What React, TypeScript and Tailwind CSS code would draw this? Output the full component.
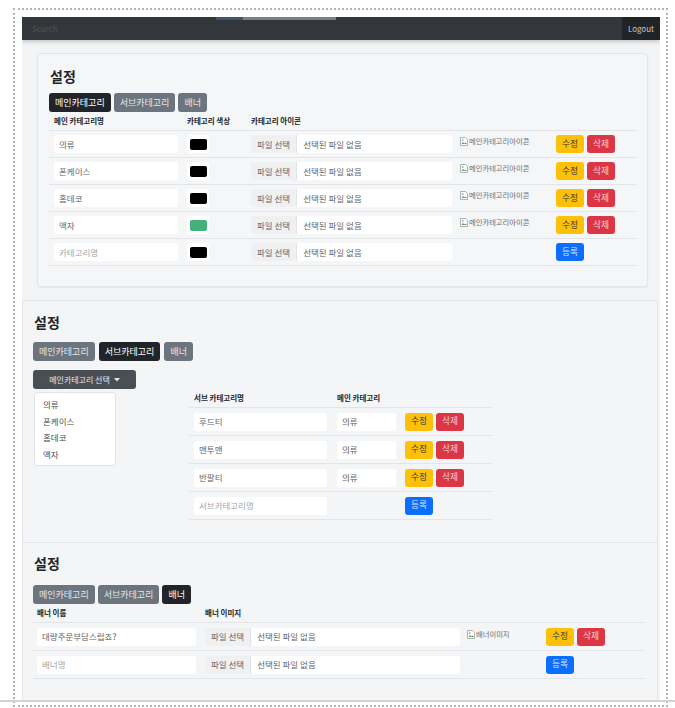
import React from "react"

const FONT = "font-['Noto_Sans_CJK_KR','Noto_Sans',sans-serif]"

function Tabs({ active, gap }: { active: number; gap: string }) {
  const labels = ["메인카테고리", "서브카테고리", "배너"]
  return (
    <div className={`flex ${gap}`}>
      {labels.map((l, i) => (
        <div
          key={l}
          className={`h-[19px] px-[6px] rounded-[3px] flex items-center text-[9px] leading-none ${
            i === active ? "bg-[#212529] text-white" : "bg-[#6c757d] text-[#e4e6e8]"
          }`}
        >
          {l}
        </div>
      ))}
    </div>
  )
}

function Heading() {
  return <h2 className="text-[14px] leading-[18px] font-bold text-[#212529] pl-[1px]">설정</h2>
}

function TextBox({ value, placeholder, w }: { value?: string; placeholder?: string; w: string }) {
  return (
    <div className={`${w} h-[18px] bg-white rounded-[3px] px-[5px] flex items-center text-[8.5px] leading-none`}>
      {value ? <span className="text-[#5f646a]">{value}</span> : <span className="text-[#a3a7ab]">{placeholder}</span>}
    </div>
  )
}

function FileBox({ w }: { w: string }) {
  return (
    <div className={`${w} h-[18px] bg-white rounded-[3px] flex items-stretch text-[8.5px] leading-none text-[#5f646a] overflow-hidden`}>
      <div className="bg-[#eef0f2] px-[6px] flex items-center border-r border-[#e2e4e7]">파일 선택</div>
      <div className="pl-[6px] flex items-center">선택된 파일 없음</div>
    </div>
  )
}

function Swatch({ color }: { color: string }) {
  return (
    <div className="w-[22px] h-[18px] bg-white rounded-[3px] flex items-center justify-center">
      <div className="w-[17px] h-[11px] rounded-[2px]" style={{ backgroundColor: color }} />
    </div>
  )
}

function Btn({ kind, children }: { kind: "edit" | "del" | "add"; children: React.ReactNode }) {
  const cls =
    kind === "edit"
      ? "bg-[#ffc107] text-[#3a3a3a]"
      : kind === "del"
        ? "bg-[#dc3545] text-[#f3d6d9]"
        : "bg-[#0d6efd] text-[#dbe8ff]"
  return <div className={`h-[18px] px-[6px] rounded-[3px] flex items-center text-[8.7px] leading-none ${cls}`}>{children}</div>
}

function Broken({ alt }: { alt: string }) {
  return (
    <div className="flex items-center gap-[1px] text-[7.3px] leading-[9px] text-[#6a6e73]">
      <svg width="8" height="9" viewBox="0 0 16 18">
        <path d="M1 1h10l4 4v12H1z" fill="#fff" stroke="#9a9a9a" strokeWidth="1.5" />
        <path d="M3 14l3-4 3 3 2-2 3 3z" fill="#5aa05a" />
        <circle cx="5.5" cy="6" r="1.6" fill="#4a90d9" />
      </svg>
      <span>{alt}</span>
    </div>
  )
}

const mainRows = [
  { name: "의류", color: "#000000" },
  { name: "폰케이스", color: "#000000" },
  { name: "홈데코", color: "#000000" },
  { name: "액자", color: "#44b07a" },
]

const subRows = ["후드티", "맨투맨", "반팔티"]

function MainSection() {
  return (
    <div className="ml-[15px] w-[611px] h-[234px] border border-[#e4e6e9] rounded-[4px] bg-[#f5f6f8] shadow-[0_1px_2px_rgba(0,0,0,0.06)] pl-[11px] pt-[13px]">
      <Heading />
      <div className="mt-[8px]">
        <Tabs active={0} gap="gap-[3px]" />
      </div>
      <div className="w-[588px] text-[#212529]">
        <div className="h-[19px] flex items-center border-b border-[#e2e4e7] text-[7.5px] font-bold leading-none">
          <div className="w-[134px] pl-[5px]">메인 카테고리명</div>
          <div className="w-[64px] pl-[4px]">카테고리 색상</div>
          <div className="w-[209px] pl-[4px]">카테고리 아이콘</div>
        </div>
        {mainRows.map((r) => (
          <div key={r.name} className="h-[27px] flex items-center border-b border-[#e2e4e7]">
            <div className="w-[134px] pl-[5px]">
              <TextBox value={r.name} w="w-[124px]" />
            </div>
            <div className="w-[64px] pl-[4px]">
              <Swatch color={r.color} />
            </div>
            <div className="w-[209px] pl-[4px]">
              <FileBox w="w-[201px]" />
            </div>
            <div className="w-[96px] pl-[4px] self-start pt-[6px]">
              <Broken alt="메인카테고리아이콘" />
            </div>
            <div className="w-[85px] pl-[4px] flex gap-[3px]">
              <Btn kind="edit">수정</Btn>
              <Btn kind="del">삭제</Btn>
            </div>
          </div>
        ))}
        <div className="h-[27px] flex items-center border-b border-[#e2e4e7]">
          <div className="w-[134px] pl-[5px]">
            <TextBox placeholder="카테고리명" w="w-[124px]" />
          </div>
          <div className="w-[64px] pl-[4px]">
            <Swatch color="#000000" />
          </div>
          <div className="w-[209px] pl-[4px]">
            <FileBox w="w-[201px]" />
          </div>
          <div className="w-[96px]" />
          <div className="w-[85px] pl-[4px] flex">
            <Btn kind="add">등록</Btn>
          </div>
        </div>
      </div>
    </div>
  )
}

function SubSection() {
  return (
    <div className="w-[636px] h-[242px] border-t border-x border-[#e2e4e7] bg-[#f4f5f7] pl-[10px] pt-[12px]">
      <Heading />
      <div className="mt-[11px]">
        <Tabs active={1} gap="gap-[4px]" />
      </div>
      <div className="mt-[9px] w-[103px] h-[19px] rounded-[3px] bg-[#4a4f55] flex items-center justify-center gap-[4px] text-[8px] leading-none text-[#e6e7e9]">
        <span>메인카테고리 선택</span>
        <svg width="6" height="4" viewBox="0 0 6 4">
          <path d="M0 0h6L3 3.5z" fill="#e6e7e9" />
        </svg>
      </div>
      <div className="flex">
        <div className="w-[156px] pl-[1px] pt-[3px]">
          <div className="w-[82px] h-[74px] bg-white border border-[#e2e4e7] rounded-[3px] pl-[8px] pt-[3px] text-[8.5px] leading-[16.5px] text-[#4a4e53]">
            <div>의류</div>
            <div>폰케이스</div>
            <div>홈데코</div>
            <div>액자</div>
          </div>
        </div>
        <div className="w-[303px] text-[#212529]">
          <div className="h-[19px] flex items-center border-b border-[#e2e4e7] text-[7.5px] font-bold leading-none">
            <div className="w-[144px] pl-[5px]">서브 카테고리명</div>
            <div className="w-[68px] pl-[4px]">메인 카테고리</div>
          </div>
          {subRows.map((s) => (
            <div key={s} className="h-[28px] flex items-center border-b border-[#e2e4e7]">
              <div className="w-[144px] pl-[5px]">
                <TextBox value={s} w="w-[133px]" />
              </div>
              <div className="w-[68px] pl-[4px]">
                <TextBox value="의류" w="w-[59px]" />
              </div>
              <div className="w-[91px] pl-[4px] flex gap-[3px]">
                <Btn kind="edit">수정</Btn>
                <Btn kind="del">삭제</Btn>
              </div>
            </div>
          ))}
          <div className="h-[28px] flex items-center border-b border-[#e2e4e7]">
            <div className="w-[144px] pl-[5px]">
              <TextBox placeholder="서브카테고리명" w="w-[133px]" />
            </div>
            <div className="w-[68px]" />
            <div className="w-[91px] pl-[4px] flex">
              <Btn kind="add">등록</Btn>
            </div>
          </div>
        </div>
      </div>
    </div>
  )
}

function BannerSection() {
  return (
    <div className="w-[636px] flex-1 border-t border-x border-[#e2e4e7] bg-[#f4f5f7] pl-[10px] pt-[11px]">
      <Heading />
      <div className="mt-[13px]">
        <Tabs active={2} gap="gap-[3px]" />
      </div>
      <div className="w-[612px] text-[#212529]">
        <div className="h-[19px] flex items-center border-b border-[#e2e4e7] text-[7.5px] font-bold leading-none">
          <div className="w-[168px] pl-[4px]">배너 이름</div>
          <div className="w-[262px] pl-[4px]">배너 이미지</div>
        </div>
        <div className="h-[28px] flex items-center border-b border-[#e2e4e7]">
          <div className="w-[168px] pl-[4px]">
            <TextBox value="대량주문부담스럽죠?" w="w-[159px]" />
          </div>
          <div className="w-[262px] pl-[4px]">
            <FileBox w="w-[255px]" />
          </div>
          <div className="w-[79px] pl-[4px] self-start pt-[7px]">
            <Broken alt="배너이미지" />
          </div>
          <div className="w-[103px] pl-[4px] flex gap-[3px]">
            <Btn kind="edit">수정</Btn>
            <Btn kind="del">삭제</Btn>
          </div>
        </div>
        <div className="h-[28px] flex items-center border-b border-[#e2e4e7]">
          <div className="w-[168px] pl-[4px]">
            <TextBox placeholder="배너명" w="w-[159px]" />
          </div>
          <div className="w-[262px] pl-[4px]">
            <FileBox w="w-[255px]" />
          </div>
          <div className="w-[79px]" />
          <div className="w-[103px] pl-[4px] flex">
            <Btn kind="add">등록</Btn>
          </div>
        </div>
      </div>
    </div>
  )
}

export default function App() {
  return (
    <div className={`relative w-[675px] h-[708px] bg-white overflow-hidden ${FONT}`}>
      <div className="ml-[13px] mt-[8px] w-[655px] h-[699px] border-2 border-dotted border-[#b4b4b4] pl-[7px] pr-[6px] pt-[7px] pb-[5px]">
        <div className="h-full flex flex-col bg-[#f3f4f6] overflow-hidden">
          {/* navbar */}
          <div className="relative z-10 h-[23px] shrink-0 bg-[#33373b] flex items-center justify-between shadow-[0_2px_4px_rgba(0,0,0,0.18)]">
            <span className="pl-[10px] text-[8px] leading-none text-[#4d5257]">Search</span>
            <div className="absolute left-[194px] top-0 w-[27px] h-[3px] bg-[#3b5573]" />
            <div className="absolute left-[221px] top-0 w-[93px] h-[3px] bg-[#7a7f84]" />
            <div className="h-full w-[38px] bg-[#212427] flex items-center justify-center text-[8px] leading-none text-[#c6c8ca]">
              Logout
            </div>
          </div>

          <div className="pt-[13px] pb-[13px] shrink-0">
            <MainSection />
          </div>
          <SubSection />
          <BannerSection />
        </div>
      </div>
      <div className="absolute left-0 top-[700px] w-full h-[2px] bg-[#d2d2d2]" />
    </div>
  )
}
